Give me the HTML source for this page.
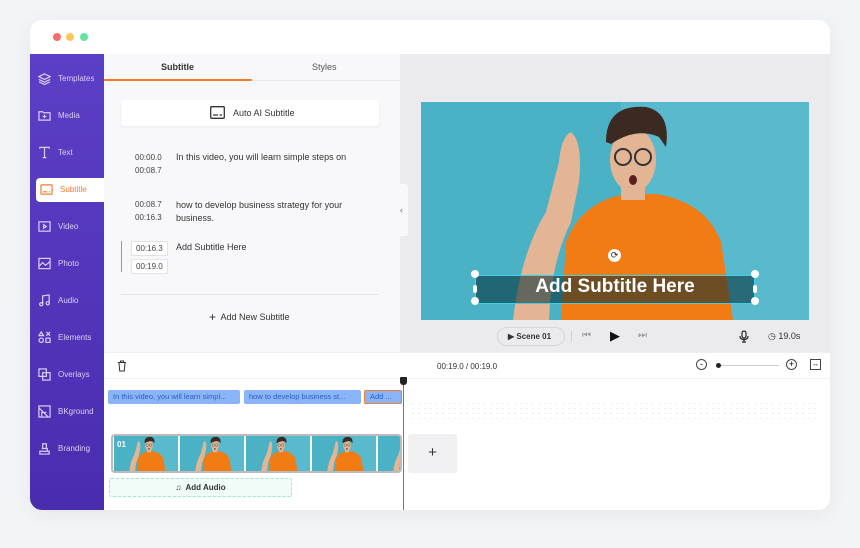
<!DOCTYPE html>
<html><head><meta charset="utf-8"><style>
*{box-sizing:border-box;margin:0;padding:0}
body{width:860px;height:548px;background:#f3f4f8;font-family:"Liberation Sans",sans-serif;position:relative;overflow:hidden}
.win{position:absolute;left:30px;top:20px;width:800px;height:490px;background:#fff;border-radius:12px;overflow:hidden;box-shadow:0 4px 20px rgba(0,0,0,.06)}
.dot{position:absolute;top:13px;width:8px;height:8px;border-radius:50%}
.side{position:absolute;left:0;top:34px;width:74px;height:456px;background:linear-gradient(#5b3fc6,#4a2cae)}
.si{position:absolute;left:8px;color:#d8d0f5;font-size:8px;display:flex;align-items:center;gap:7px}
.si svg{width:13px;height:13px;stroke:#d8d0f5;fill:none;stroke-width:1.3}
.act{position:absolute;left:6px;top:124px;width:68px;height:24px;background:#fff;border-radius:4px 0 0 4px}
.panel{position:absolute;left:74px;top:34px;width:296px;height:298px;background:#f8f8fa}
.tab{position:absolute;top:8px;font-size:9px;color:#555}
.prev{position:absolute;left:370px;top:34px;width:430px;height:298px;background:#ebebef}
.t{position:absolute;font-size:9px;color:#333}
.tm{position:absolute;font-size:8px;color:#444}
.tl{position:absolute;left:74px;top:332px;width:726px;height:158px;background:#fff}
.chip{position:absolute;top:370px;height:14px;background:#8ab4f8;border-radius:2px;color:#2a5dc0;font-size:7.5px;line-height:14px;padding-left:5px;white-space:nowrap;overflow:hidden}
</style></head><body>
<svg width="0" height="0" style="position:absolute"><defs>
<symbol id="p" viewBox="0 0 388 218">
<rect width="388" height="218" fill="#4bb2c6"/>
<rect x="200" width="188" height="218" fill="#62c0d4" opacity=".6"/>
<path d="M140 218 L145 140 Q160 100 205 92 L235 92 Q285 100 300 140 L312 218Z" fill="#f27b14"/>
<path d="M92 218 Q100 150 125 110 L138 60 Q140 35 150 30 Q162 40 158 80 L150 120 Q130 160 128 218Z" fill="#e3b594"/>
<ellipse cx="212" cy="58" rx="23" ry="32" fill="#e3b594"/>
<rect x="200" y="82" width="24" height="16" fill="#e3b594"/>
<path d="M185 40 Q185 2 225 5 Q250 10 245 45 L238 35 Q215 25 190 42Z" fill="#3a2a22"/>
<circle cx="202" cy="55" r="8" fill="none" stroke="#333" stroke-width="2"/><circle cx="222" cy="55" r="8" fill="none" stroke="#333" stroke-width="2"/>
<ellipse cx="212" cy="78" rx="4" ry="5" fill="#5a2020"/>
</symbol></defs></svg>
<div class="win">
<div class="dot" style="left:23px;background:#fd6b6b"></div><div class="dot" style="left:36px;background:#fbc75a"></div><div class="dot" style="left:50px;background:#63e5a0"></div>
<div class="side">
<div class="act"></div>
<div class="si" style="top:18px"><svg viewBox="0 0 14 14"><path d="M7 2 13 5 7 8 1 5Z M1 8 7 11 13 8 M1 10.5 7 13.5 13 10.5"/></svg>Templates</div>
<div class="si" style="top:55px"><svg viewBox="0 0 14 14"><path d="M1 3h4l1 1h7v8H1Z M7 6v4M5 8h4"/></svg>Media</div>
<div class="si" style="top:92px"><svg viewBox="0 0 14 14"><path d="M2 3V1.5h10V3M7 1.5v11M5 12.5h4"/></svg>Text</div>
<div class="si" style="top:129px;left:10px;color:#f47b30"><svg viewBox="0 0 14 14" style="stroke:#f47b30"><rect x="1" y="2" width="12" height="10" rx="1"/><path d="M3 9.5h5M9.5 9.5h1.5"/></svg>Subtitle</div>
<div class="si" style="top:166px"><svg viewBox="0 0 14 14"><rect x="1" y="2" width="12" height="10"/><path d="M6 5v4l3-2z"/></svg>Video</div>
<div class="si" style="top:203px"><svg viewBox="0 0 14 14"><rect x="1" y="1.5" width="12" height="11"/><path d="M1 10 5 6 8 9 13 5"/></svg>Photo</div>
<div class="si" style="top:240px"><svg viewBox="0 0 14 14"><path d="M5 11V2l7-1v9"/><circle cx="3.5" cy="11" r="1.7"/><circle cx="10.5" cy="10" r="1.7"/></svg>Audio</div>
<div class="si" style="top:277px"><svg viewBox="0 0 14 14"><path d="M3.5 1 6 5H1Z M9 1l4 4M13 1 9 5"/><circle cx="3.5" cy="10" r="2.3"/><rect x="8.5" y="7.7" width="4.5" height="4.5"/></svg>Elements</div>
<div class="si" style="top:314px"><svg viewBox="0 0 14 14"><rect x="1" y="1" width="8" height="8"/><rect x="5" y="5" width="8" height="8"/></svg>Overlays</div>
<div class="si" style="top:351px"><svg viewBox="0 0 14 14"><rect x="1" y="1" width="12" height="12"/><path d="M1 3 11 13M4 13V8h5"/></svg>BKground</div>
<div class="si" style="top:388px"><svg viewBox="0 0 14 14"><path d="M5 2h4v5H5ZM2 10h10v3H2ZM4 7h6v3H4"/></svg>Branding</div>
</div>
<div class="panel">
<div class="tab" style="left:57px;font-weight:bold;color:#333">Subtitle</div>
<div class="tab" style="left:208px">Styles</div>
<div style="position:absolute;left:0;top:25px;width:148px;height:2px;background:#f47b30"></div>
<div style="position:absolute;left:148px;top:26px;width:148px;height:1px;background:#e8e8ec"></div>
<div style="position:absolute;left:17px;top:46px;width:258px;height:26px;background:#fff;border-radius:3px;box-shadow:0 1px 3px rgba(0,0,0,.06)"></div>
<svg style="position:absolute;left:106px;top:52px" width="15" height="13" viewBox="0 0 15 13"><rect x=".7" y=".7" width="13.6" height="11.6" rx="1" fill="none" stroke="#333" stroke-width="1.3"/><path d="M3 9h5M9.5 9h2.5" stroke="#333" stroke-width="1.2"/></svg>
<div class="t" style="left:129px;top:54px">Auto AI Subtitle</div>
<div class="tm" style="left:31px;top:99px">00:00.0</div><div class="tm" style="left:31px;top:112px">00:08.7</div>
<div class="t" style="left:72px;top:98px">In this video, you will learn simple steps on</div>
<div class="tm" style="left:31px;top:146px">00:08.7</div><div class="tm" style="left:31px;top:159px">00:16.3</div>
<div class="t" style="left:72px;top:145px;line-height:13px">how to develop business strategy for your<br>business.</div>
<div style="position:absolute;left:17px;top:187px;width:1px;height:31px;background:#f47b30"></div>
<div class="tm" style="left:27px;top:187px;border:1px solid #e3e3e6;background:#fff;padding:2px 4px">00:16.3</div>
<div class="tm" style="left:27px;top:205px;border:1px solid #e3e3e6;background:#fff;padding:2px 4px">00:19.0</div>
<div class="t" style="left:72px;top:188px">Add Subtitle Here</div>
<div style="position:absolute;left:17px;top:240px;width:258px;height:1px;background:#e5e5e8"></div>
<div class="t" style="left:105px;top:255px"><span style="font-size:12px;position:relative;top:1px">+</span>&nbsp; Add New Subtitle</div>
</div>
<div class="prev">
<div style="position:absolute;left:0;top:130px;width:8px;height:52px;background:#f8f8fa;border-radius:0 3px 3px 0;font-size:9px;color:#666;line-height:52px">‹</div>
<svg style="position:absolute;left:21px;top:48px" width="388" height="218"><use href="#p"/></svg>
<div style="position:absolute;left:75px;top:221px;width:280px;height:29px;background:rgba(0,40,50,.55);border:1px solid #3ed0e6"></div>
<div style="position:absolute;left:75px;top:222px;width:280px;text-align:center;color:#fff;font-weight:bold;font-size:19px">Add Subtitle Here</div>
<div style="position:absolute;left:71px;top:216px;width:8px;height:8px;border-radius:50%;background:#fff"></div>
<div style="position:absolute;left:351px;top:216px;width:8px;height:8px;border-radius:50%;background:#fff"></div>
<div style="position:absolute;left:71px;top:243px;width:8px;height:8px;border-radius:50%;background:#fff"></div>
<div style="position:absolute;left:351px;top:243px;width:8px;height:8px;border-radius:50%;background:#fff"></div>
<div style="position:absolute;left:73px;top:231px;width:4px;height:8px;border-radius:2px;background:#fff"></div>
<div style="position:absolute;left:353px;top:231px;width:4px;height:8px;border-radius:2px;background:#fff"></div>
<div style="position:absolute;left:208px;top:195px;width:13px;height:13px;border-radius:50%;background:#fff;font-size:9px;text-align:center;line-height:13px;color:#222">⟳</div>
<div style="position:absolute;left:97px;top:273px;width:68px;height:19px;border:1px solid #d6d6da;border-radius:10px;font-size:8px;font-weight:bold;color:#333;line-height:17px;padding-left:10px">▶ Scene 01</div>
<div style="position:absolute;left:171px;top:277px;width:1px;height:11px;background:#d0d0d4"></div>
<div style="position:absolute;left:182px;top:276px;font-size:10px;color:#999">⏮</div>
<div style="position:absolute;left:210px;top:274px;font-size:13px;color:#111">▶</div>
<div style="position:absolute;left:238px;top:276px;font-size:10px;color:#999">⏭</div>
<svg style="position:absolute;left:339px;top:276px" width="10" height="13" viewBox="0 0 10 13"><rect x="3" y="1" width="4" height="7" rx="2" fill="none" stroke="#222" stroke-width="1.2"/><path d="M1 6q0 3.5 4 3.5t4-3.5M5 9.5v2.5M3 12h4" fill="none" stroke="#222" stroke-width="1.2"/></svg>
<div style="position:absolute;left:368px;top:277px;font-size:9px;color:#333">◷ 19.0s</div>
</div>
<div class="tl">
<div style="position:absolute;left:0;top:0;width:726px;height:1px;background:#eee"></div>
<svg style="position:absolute;left:13px;top:8px" width="10" height="12" viewBox="0 0 10 12"><path d="M1 2.5h8M3.5 2.5V1h3v1.5M2 2.5l.7 8.5h4.6L8 2.5" fill="none" stroke="#333" stroke-width="1"/></svg>
<div style="position:absolute;left:333px;top:10px;font-size:8px;color:#333">00:19.0 / 00:19.0</div>
<div style="position:absolute;left:592px;top:7px;width:11px;height:11px;border:1px solid #444;border-radius:50%;font-size:9px;line-height:9px;text-align:center">-</div>
<div style="position:absolute;left:612px;top:11px;width:5px;height:5px;border-radius:50%;background:#222"></div>
<div style="position:absolute;left:617px;top:13px;width:58px;height:1px;background:#ccc"></div>
<div style="position:absolute;left:682px;top:7px;width:11px;height:11px;border:1px solid #444;border-radius:50%;font-size:9px;line-height:9px;text-align:center">+</div>
<div style="position:absolute;left:706px;top:7px;width:11px;height:11px;border:1px solid #444;font-size:7px;line-height:9px;text-align:center">↔</div>
<div style="position:absolute;left:0;top:26px;width:726px;height:1px;background:#f0f0f2"></div>
<div style="position:absolute;left:306px;top:49px;width:410px;height:22px;background-image:radial-gradient(#ddd 0.6px,transparent 0.8px);background-size:6px 5px"></div>
<div style="position:absolute;left:299px;top:26px;width:1px;height:132px;background:#777"></div>
<div style="position:absolute;left:296px;top:25px;width:7px;height:8px;background:#222;border-radius:1px 1px 3px 3px"></div>
<div style="position:absolute;left:7px;top:82px;width:291px;height:39px;border:2px solid #bbb;border-radius:4px;overflow:hidden">
<svg width="290" height="36" viewBox="0 0 290 36" preserveAspectRatio="none" style="position:absolute;left:0;top:0"><use href="#p" x="0" width="66" height="36"/><use href="#p" x="66" width="66" height="36"/><use href="#p" x="132" width="66" height="36"/><use href="#p" x="198" width="66" height="36"/><use href="#p" x="264" width="66" height="36"/></svg>
<div style="position:absolute;left:4px;top:4px;color:#fff;font-size:8px;font-weight:bold">01</div>
</div>
<div style="position:absolute;left:304px;top:82px;width:49px;height:39px;background:#f0f0f3;border-radius:3px;text-align:center;line-height:38px;font-size:15px;color:#333">+</div>
<div style="position:absolute;left:5px;top:126px;width:183px;height:19px;border:1px dashed #9fe8cc;background:#effcf7;border-radius:2px;font-size:8px;font-weight:bold;color:#333;text-align:center;line-height:17px">♫&nbsp; Add Audio</div>
</div>
<div class="chip" style="left:78px;width:132px">In this video, you will learn simpl...</div>
<div class="chip" style="left:214px;width:117px">how to develop business st...</div>
<div class="chip" style="left:334px;width:38px;border:1px solid #f47b30;line-height:12px">Add ...</div>
</div>
</body></html>
